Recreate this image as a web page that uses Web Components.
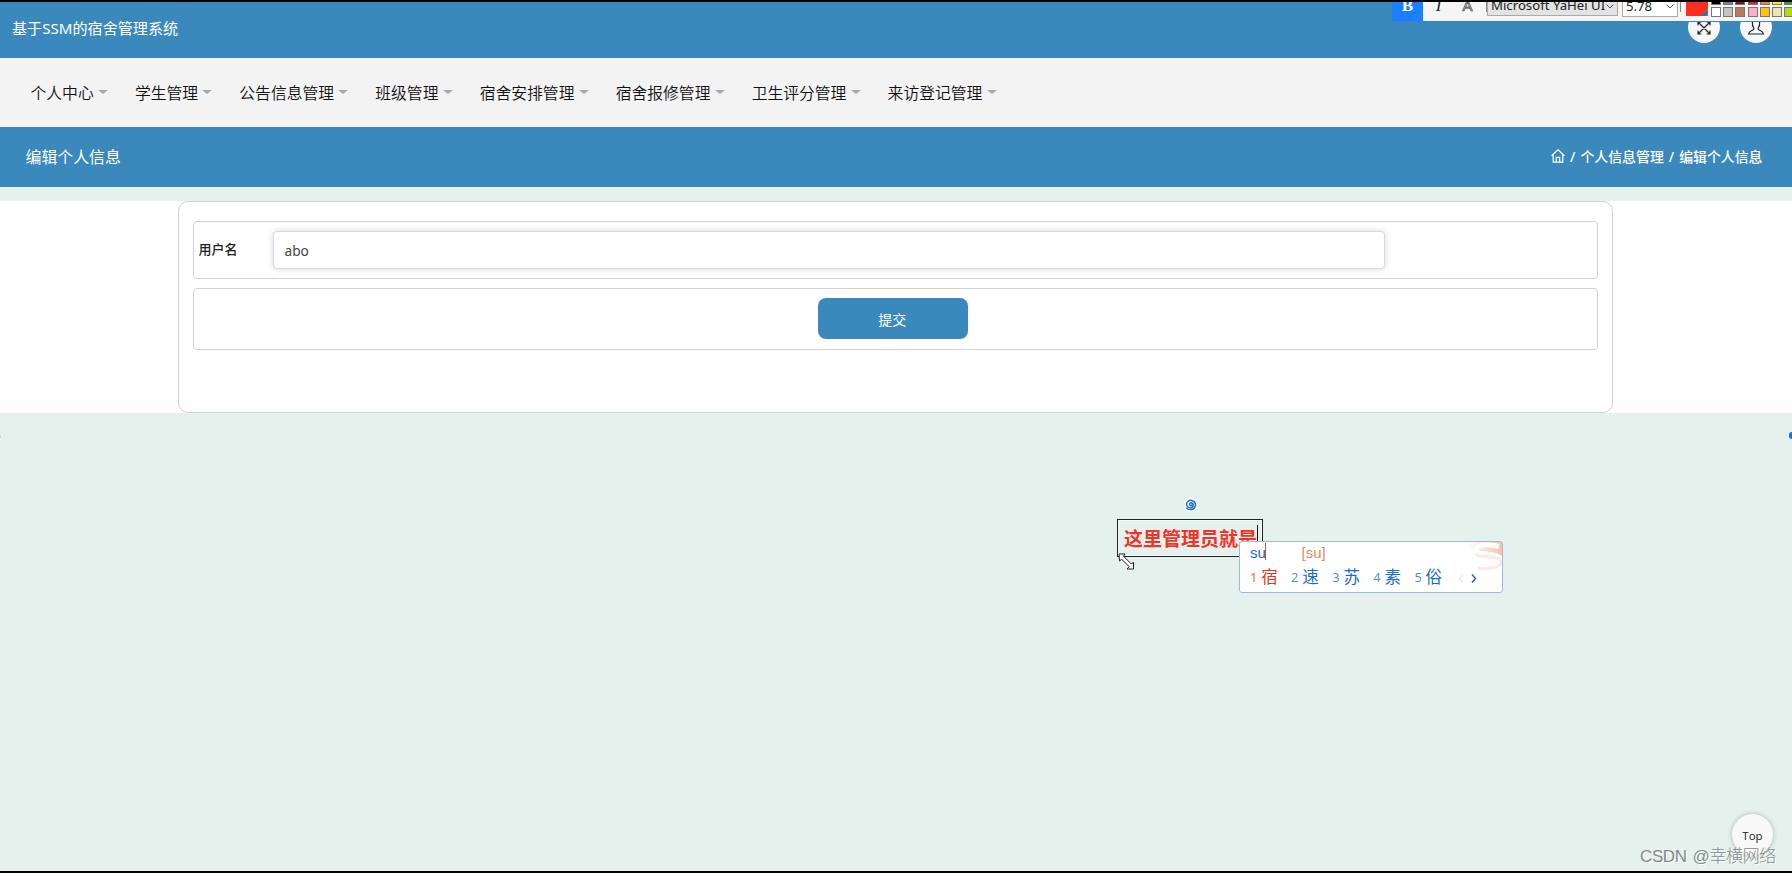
<!DOCTYPE html>
<html lang="zh-CN">
<head>
<meta charset="utf-8">
<title>基于SSM的宿舍管理系统</title>
<style>
    html, body {
        margin: 0;
        height: 100%;
        overflow: hidden;
    }
    body {
        box-sizing: border-box;
        display: flex;
        flex-direction: column;
        position: relative;
        border-top: 2px solid #000;
        border-bottom: 2px solid #000;
        background: #e4f1ed;
        font-family: "Noto Sans", "Noto Sans CJK SC", sans-serif;
        --theme: #3b89bc;
    }
</style>
</head>
<body>
<page-header>基于SSM的宿舍管理系统</page-header>
<nav-bar>
    <nav-item>个人中心</nav-item>
    <nav-item>学生管理</nav-item>
    <nav-item>公告信息管理</nav-item>
    <nav-item>班级管理</nav-item>
    <nav-item>宿舍安排管理</nav-item>
    <nav-item>宿舍报修管理</nav-item>
    <nav-item>卫生评分管理</nav-item>
    <nav-item>来访登记管理</nav-item>
</nav-bar>
<crumb-bar>
    编辑个人信息
    <span slot="parent">个人信息管理</span>
    <span slot="current">编辑个人信息</span>
</crumb-bar>
<edit-card>
    <form-row label="用户名" value="abo"></form-row>
    <submit-row>提交</submit-row>
</edit-card>
<ink-toolbar></ink-toolbar>
<text-note>这里管理员就是</text-note>
<ime-popup typed="su" words="宿 速 苏 素 俗"></ime-popup>
<back-top>Top</back-top>
<water-mark><span>CSDN</span> <span>@幸横网络</span></water-mark>
<edge-handles></edge-handles>

<script>
class BaseElement extends HTMLElement {
    constructor() {
        super();
        this.attachShadow({mode: 'open'});
    }

    connectedCallback() {
        this.shadowRoot.innerHTML = this.render();
    }
}

class PageHeader extends BaseElement {
    render() {
        return `
            <style>
                :host {
                    display: flex;
                    align-items: center;
                    justify-content: space-between;
                    box-sizing: border-box;
                    height: 56px;
                    flex: none;
                    padding: 0 20px 0 12px;
                    background: var(--theme);
                    color: #fff;
                    font-size: 15.100px;
                    line-height: 20px;
                }
                .title { margin-top: -5px; }
                .tools { display: flex; gap: 20px; margin-top: -7px; }
                .tools span {
                    width: 32px;
                    height: 32px;
                    border-radius: 50%;
                    background: #f7f7f7;
                }
                svg {
                    display: block;
                    fill: none;
                    stroke: #222;
                    stroke-width: 1.2;
                }
            </style>
            <div class="title"><slot></slot></div>
            <div class="tools">
                <span><svg width="32" height="32" viewBox="0 0 32 32">
                    <path d="M10 11l12 12M22 11L10 23M10 14.500V11h3.500M18.500 11H22v3.500M22 19.500V23h-3.500M13.500 23H10v-3.500"/>
                </svg></span>
                <span><svg width="32" height="32" viewBox="0 0 32 32">
                    <path d="M14 17.500c-2.500-3.500-2.500-9.500 2-9.500s4.500 6 2 9.500c0 2.500 5 1.500 5.500 5.500h-15c.5-4 5.500-3 5.500-5.500z"/>
                </svg></span>
            </div>`;
    }
}

class NavBar extends BaseElement {
    render() {
        return `
            <style>
                :host {
                    display: flex;
                    align-items: center;
                    gap: 26.800px;
                    box-sizing: border-box;
                    height: 69px;
                    flex: none;
                    padding: 0 30.500px;
                    background: #f3f3f3;
                }
            </style>
            <slot></slot>`;
    }
}

class NavItem extends BaseElement {
    render() {
        return `
            <style>
                :host {
                    display: flex;
                    align-items: center;
                    font-size: 15.800px;
                    font-weight: 350;
                    line-height: 24px;
                    color: #111;
                }
                i {
                    margin: -2px 0 0 4.400px;
                    border: 5px solid transparent;
                    border-top: 4px solid #a9a9a9;
                    border-bottom: 0;
                }
            </style>
            <slot></slot><i></i>`;
    }
}

class CrumbBar extends BaseElement {
    render() {
        return `
            <style>
                :host {
                    display: flex;
                    align-items: center;
                    justify-content: space-between;
                    box-sizing: border-box;
                    height: 60px;
                    flex: none;
                    padding: 0 29.500px 1px 25.500px;
                    background: var(--theme);
                    color: #fff;
                    font-size: 15.900px;
                }
                nav {
                    display: flex;
                    align-items: center;
                    margin-top: -1px;
                    font-size: 13.900px;
                    font-weight: 500;
                    gap: 5px;
                }
                svg {
                    fill: none;
                    stroke: #fff;
                    stroke-width: 1.200;
                }
            </style>
            <div><slot></slot></div>
            <nav>
                <svg width="14" height="14" viewBox="0 0 14 14">
                    <path d="M.6 6.800L7 .900l6.400 5.900M2.200 5.700v7.500h9.600V5.700M5.300 13V8.300h3.400V13"/>
                </svg>
                <span>/</span><slot name="parent"></slot><span>/</span><slot name="current"></slot>
            </nav>`;
    }
}

class EditCard extends BaseElement {
    render() {
        return `
            <style>
                :host {
                    display: block;
                    flex: none;
                    margin-top: 14px;
                    padding: 0 179px 0 177.500px;
                    background: #fff;
                }
                .card {
                    display: flex;
                    flex-direction: column;
                    gap: 9px;
                    box-sizing: border-box;
                    height: 211.500px;
                    padding: 18.500px 14px 0;
                    border: 1px solid #ccd5d2;
                    border-radius: 10px;
                }
            </style>
            <div class="card"><slot></slot></div>`;
    }
}

class FormRow extends BaseElement {
    render() {
        return `
            <style>
                :host {
                    display: flex;
                    align-items: center;
                    box-sizing: border-box;
                    height: 58.500px;
                    padding-left: 5px;
                    border: 1px solid #d2d2d2;
                    border-radius: 4px;
                }
                label {
                    width: 74px;
                    margin-top: -2px;
                    font-size: 13px;
                    font-weight: 500;
                    color: #222;
                }
                input {
                    box-sizing: border-box;
                    width: 1112.500px;
                    height: 38px;
                    padding: 1px 11px 0;
                    border: 1px solid #d9dade;
                    border-radius: 4px;
                    box-shadow: 0 0 6px rgba(0, 0, 0, .16);
                    font: 13.700px "Noto Sans", sans-serif;
                    color: #444;
                    outline: none;
                }
            </style>
            <label>${this.getAttribute('label')}</label>
            <input type="text" value="${this.getAttribute('value')}">`;
    }
}

class SubmitRow extends BaseElement {
    render() {
        return `
            <style>
                :host {
                    display: flex;
                    align-items: center;
                    justify-content: center;
                    box-sizing: border-box;
                    height: 62px;
                    padding-right: 4px;
                    border: 1px solid #d2d2d2;
                    border-radius: 4px;
                }
                button {
                    width: 150px;
                    height: 41px;
                    margin-top: -1px;
                    padding: 0 2px 0 0;
                    border: 0;
                    border-radius: 8px;
                    background: var(--theme);
                    color: #fff;
                    font: 14px "Noto Sans", "Noto Sans CJK SC", sans-serif;
                }
            </style>
            <button><slot></slot></button>`;
    }
}

// Floating text toolbar, it runs off the top and right of the window
class InkToolbar extends BaseElement {
    render() {
        const top = ['#000', '#7d7d7d', '#870f18', '#ed1c24', '#ff7f27', '#fff200', '#16a344'];
        const bottom = ['#fff', '#c3c3c3', '#b97a57', '#ffaec9', '#ffc20e', '#efe4b0', '#b5d90f'];
        const swatches = top.concat(bottom).map(c => `<i style="background:${c}"></i>`).join('');
        const arrow = `<svg width="8" height="5" viewBox="0 0 8 5"><path d="M.5.5L4 4 7.500.500" fill="none" stroke="#555"/></svg>`;

        return `
            <style>
                :host {
                    position: absolute;
                    top: 0;
                    left: 1392px;
                    width: 400px;
                    height: 19px;
                    overflow: hidden;
                    display: flex;
                    background: #f5f5f5;
                    box-shadow: 0 1px 0 #3f7fd0;
                    font-size: 13.200px;
                    line-height: 14px;
                    color: #222;
                }
                b, em, .outline {
                    width: 31px;
                    flex: none;
                    text-align: center;
                    line-height: 8px;
                    font-family: "Liberation Serif", serif;
                    font-size: 17px;
                }
                b { background: #1a80ff; color: #fff; }
                .outline {
                    width: 27px;
                    font-family: "Liberation Sans", sans-serif;
                    font-size: 15px;
                    color: #f5f5f5;
                    -webkit-text-stroke: .7px #444;
                }
                .sep { flex: none; width: 1px; height: 10px; background: #888; margin-left: 5px; }
                .box {
                    flex: none;
                    display: flex;
                    align-items: center;
                    justify-content: space-between;
                    box-sizing: border-box;
                    height: 18px;
                    margin-top: -4px;
                    padding: 0 3px;
                    border: 1px solid #aaa;
                    background: #e3e3e3;
                    white-space: nowrap;
                }
                .box span { margin-top: -4px; }
                .family { width: 131px; margin-left: 0; }
                .size { width: 56px; margin-left: 4px; background: #fff; height: 19px; }
                .box svg { flex: none; margin-top: -2px; }
                .current {
                    flex: none;
                    width: 22px;
                    height: 14px;
                    margin-left: 5px;
                    background: linear-gradient(135deg, #ff2e22 78%, #30b030 78%, #3050e0 90%, #d040d0 90%);
                }
                .swatches {
                    display: grid;
                    grid-template-columns: repeat(7, 10px);
                    grid-auto-rows: 10px;
                    gap: 2px;
                    column-gap: 2.200px;
                    margin: -7px 0 0 3px;
                }
                .swatches i { box-sizing: border-box; border: 1px solid #777; }
            </style>
            <b>B</b><em>I</em><span class="outline">A</span>
            <span class="sep"></span>
            <div class="box family"><span>Microsoft YaHei UI</span>${arrow}</div>
            <div class="box size"><span>5.78</span>${arrow}</div>
            <span class="sep" style="margin-left:2px"></span>
            <span class="current"></span>
            <div class="swatches">${swatches}</div>`;
    }
}

class TextNote extends BaseElement {
    render() {
        return `
            <style>
                :host {
                    position: absolute;
                    left: 1117px;
                    top: 517px;
                    box-sizing: border-box;
                    width: 146px;
                    height: 37.500px;
                    padding: 5px 0 0 6px;
                    border: 1px solid #222;
                    box-shadow: inset 0 0 0 1px #f4faf8;
                    font-size: 19px;
                    font-weight: bold;
                    line-height: 29px;
                    color: #f23327;
                    white-space: nowrap;
                }
                .text { display: inline-block; height: 18px; border-right: 1px solid #111; }
                svg { position: absolute; }
                .spiral { left: 65.500px; top: -22.500px; }
                .cursor { left: 0; top: 33px; }
            </style>
            <span class="text"><slot></slot></span>
            <svg class="spiral" width="14" height="14" viewBox="0 0 14 14">
                <circle cx="7" cy="7" r="7" fill="#f6fbfa"/>
                <path d="M2.400 9.800C4.500 12.600 10.500 12.300 11.500 7.500 12 3 6.500.800 3.700 3.600 1.300 6.200 3 10 6.400 9.900 9.800 9.700 10.200 5.300 7.300 4.800 5.400 4.600 4.900 7 6.500 7.600 7.600 7.800 8 6.900 7.400 6.500" fill="none" stroke="#1769dc" stroke-width="1.400"/>
            </svg>
            <svg class="cursor" width="18" height="18" viewBox="0 0 18 18">
                <path d="M1 1h6L5.500 3.200l7.600 7.600L15.500 9.500V16H9l2.200-2.300-7.500-7.500L1.500 8z" fill="#fff" stroke="#222"/>
            </svg>`;
    }
}

class ImePopup extends BaseElement {
    render() {
        const typed = this.getAttribute('typed');
        const words = this.getAttribute('words').split(' ').map((word, index) =>
            `<span class="word"><small>${index + 1}</small>${word}</span>`
        ).join('');

        return `
            <style>
                :host {
                    position: absolute;
                    left: 1239px;
                    top: 538.500px;
                    box-sizing: border-box;
                    width: 264px;
                    height: 52.500px;
                    border: 1px solid #9bbbd8;
                    border-radius: 3px;
                    background: #fff;
                    color: #1b6cc8;
                }
                .typed {
                    display: flex;
                    padding: 1px 0 0 10px;
                    font: 15px/19px "Liberation Sans", sans-serif;
                }
                .typed span { width: 15px; height: 17px; border-right: 1px solid #d0503a; }
                .typed em { margin-left: 35.500px; font-style: normal; color: #e88764; }
                .words { display: flex; align-items: center; padding: 2.500px 0 0 10px; }
                .word {
                    width: 41.100px;
                    font-size: 16.500px;
                    line-height: 25px;
                    white-space: nowrap;
                }
                .word:first-child { color: #d83b22; }
                small {
                    display: inline-block;
                    width: 11.200px;
                    font-size: 12.800px;
                    opacity: .75;
                    transform: translateY(-1px);
                }
                .arrows { margin-left: 3px; }
                .logo { position: absolute; right: 0; top: 0; }
            </style>
            <svg class="logo" width="34" height="34" viewBox="0 0 34 34">
                <defs>
                    <linearGradient id="g" x2="1" y2="0"><stop stop-color="#fff"/><stop offset="1" stop-color="#f8c0aa"/></linearGradient>
                </defs>
                <path d="M0 0h34v14C26 8 10 10 0 7z" fill="url(#g)"/>
                <path d="M31 4.500C18 1 8 3 8 8.500c0 6 22 2 22 8 0 6-14 7-24 3" fill="none" stroke="#fff" stroke-width="5"/>
                <path d="M8 12c3 4.500 25 1 25 8 0 5-12 8-23 6" fill="none" stroke="#fdeae2" stroke-width="3"/>
            </svg>
            <div class="typed"><span>${typed}</span><em>[${typed}]</em></div>
            <div class="words">${words}
                <svg class="arrows" width="20" height="10" viewBox="0 0 20 10" fill="none">
                    <path d="M4.500 2L1.500 5.500l3 3.500" stroke="#c7d8ec"/>
                    <path d="M14 1.500L17.500 5.500 14 9.500" stroke="#1b66bd" stroke-width="1.400"/>
                </svg>
            </div>`;
    }
}

class BackTop extends BaseElement {
    render() {
        return `
            <style>
                :host {
                    position: absolute;
                    left: 1732px;
                    top: 812px;
                    width: 41px;
                    height: 41px;
                    border-radius: 50%;
                    background: #f9f9f9;
                    box-shadow: 0 0 5px rgba(0, 0, 0, .25);
                    font: 11.500px/43px "Open Sans", sans-serif;
                    text-align: center;
                    color: #222;
                }
            </style>
            <slot></slot>`;
    }
}

class WaterMark extends BaseElement {
    render() {
        return `
            <style>
                :host {
                    position: absolute;
                    left: 1640px;
                    top: 841.500px;
                    display: flex;
                    gap: 6px;
                    font: 300 17px/25px "Liberation Sans", "Noto Sans CJK SC", sans-serif;
                    letter-spacing: -.4px;
                    color: #838987;
                    text-shadow: 1px 1px 0 #fff;
                    white-space: nowrap;
                }
            </style>
            <slot></slot>`;
    }
}

class EdgeHandles extends BaseElement {
    render() {
        return `
            <style>
                i {
                    position: absolute;
                    top: 430px;
                    width: 7px;
                    height: 7px;
                    border-radius: 50%;
                }
                .left { left: -7px; background: #b7d2df; border: 1px solid #f6fbfa; }
                .right { left: 1789px; width: 3px; border-radius: 4px 0 0 4px; background: #1b6fe0; }
            </style>
            <i class="left"></i><i class="right"></i>`;
    }
}

customElements.define('page-header', PageHeader);
customElements.define('nav-bar', NavBar);
customElements.define('nav-item', NavItem);
customElements.define('crumb-bar', CrumbBar);
customElements.define('edit-card', EditCard);
customElements.define('form-row', FormRow);
customElements.define('submit-row', SubmitRow);
customElements.define('ink-toolbar', InkToolbar);
customElements.define('text-note', TextNote);
customElements.define('ime-popup', ImePopup);
customElements.define('back-top', BackTop);
customElements.define('water-mark', WaterMark);
customElements.define('edge-handles', EdgeHandles);
</script>
</body>
</html>
